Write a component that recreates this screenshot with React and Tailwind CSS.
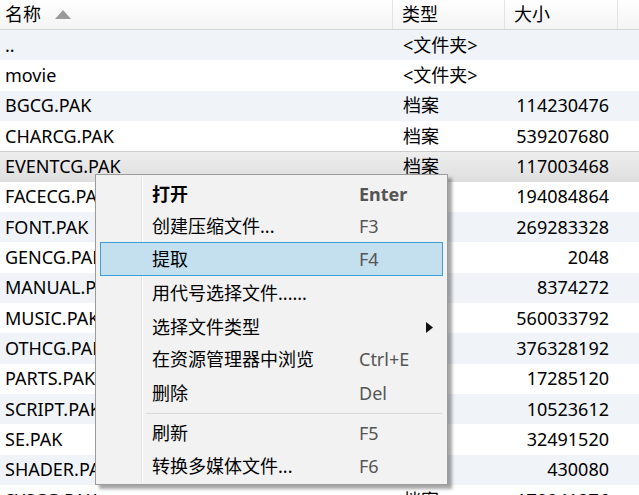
import React from "react";

const rows = [
  ["..", "<文件夹>", ""],
  ["movie", "<文件夹>", ""],
  ["BGCG.PAK", "档案", "114230476"],
  ["CHARCG.PAK", "档案", "539207680"],
  ["EVENTCG.PAK", "档案", "117003468"],
  ["FACECG.PAK", "档案", "194084864"],
  ["FONT.PAK", "档案", "269283328"],
  ["GENCG.PAK", "档案", "2048"],
  ["MANUAL.PAK", "档案", "8374272"],
  ["MUSIC.PAK", "档案", "560033792"],
  ["OTHCG.PAK", "档案", "376328192"],
  ["PARTS.PAK", "档案", "17285120"],
  ["SCRIPT.PAK", "档案", "10523612"],
  ["SE.PAK", "档案", "32491520"],
  ["SHADER.PAK", "档案", "430080"],
  ["SYSCG.PAK", "档案", "170041376"],
];

const items = [
  { label: "打开", key: "Enter", h: "h-[32px]", bold: true },
  { label: "创建压缩文件...", key: "F3", h: "h-[32px]" },
  { label: "提取", key: "F4", h: "h-[34px]", active: true },
  { label: "用代号选择文件......", key: "", h: "h-[35px]" },
  { label: "选择文件类型", key: "", h: "h-[32px]", sub: true },
  { label: "在资源管理器中浏览", key: "Ctrl+E", h: "h-[33px]" },
  { label: "删除", key: "Del", h: "h-[34px]" },
  { sep: true },
  { label: "刷新", key: "F5", h: "h-[34px]" },
  { label: "转换多媒体文件...", key: "F6", h: "h-[32px]" },
];

export default function App() {
  return (
    <div
      className="relative w-[639px] h-[495px] overflow-hidden bg-white text-black text-[18px]"
      style={{ fontFamily: '"Noto Sans", "Noto Sans CJK SC", sans-serif' }}
    >
      {/* header */}
      <div className="flex h-[30px] border-b border-[#d5d5d5] bg-gradient-to-b from-white to-[#f4f4f4] leading-normal">
        <div className="w-[393px] flex items-center pl-[5px] gap-[14px] border-r border-[#e3e3e3]">
          <span>名称</span>
          <svg width="16" height="9" viewBox="0 0 16 9">
            <polygon points="8,0 16,9 0,9" fill="#9a9a9a" />
          </svg>
        </div>
        <div className="w-[112px] flex items-center pl-[9px] border-r border-[#e3e3e3]">类型</div>
        <div className="w-[113px] flex items-center pl-[9px] border-r border-[#e3e3e3]">大小</div>
        <div className="flex-1" />
      </div>

      {/* rows */}
      <div className="flex flex-col">
        {rows.map((r, i) => {
          const sel = i === 4;
          const bg = sel
            ? "bg-gradient-to-b from-[#eeeeee] to-[#dedede] border-t border-[#cdcdcd]"
            : i % 2 === 0
            ? "bg-[#f0f4f9]"
            : "bg-white";
          return (
            <div key={i} className={`flex h-[30.33px] shrink-0 items-center leading-normal whitespace-nowrap ${bg}`}>
              <div className="w-[393px] pl-[5px]">{r[0]}</div>
              <div className="w-[112px] pl-[10px]">{r[1]}</div>
              <div className="w-[104px] text-right">{r[2]}</div>
            </div>
          );
        })}
      </div>

      {/* context menu */}
      <div className="absolute left-[95px] top-[174px] w-[353px] h-[311px] bg-[#f2f2f2] border border-[#9b9b9b] shadow-[4px_4px_3px_rgba(0,0,0,0.35)] py-[3px] px-[4px]">
        <div className="absolute left-[45px] top-[2px] bottom-[2px] w-px bg-[#e2e2e2]" />
        <div className="absolute left-[46px] top-[2px] bottom-[2px] w-px bg-white" />
        <div className="relative flex flex-col">
          {items.map((it, i) =>
            it.sep ? (
              <div key={i} className="h-[6px] flex items-center pl-[46px] pr-[1px]">
                <div className="h-px w-full bg-[#d9d9d9]" />
              </div>
            ) : (
              <div
                key={i}
                className={`flex items-center leading-normal whitespace-nowrap ${it.h} ${
                  it.active ? "bg-[#c4e0ef] border border-[#3c9edb]" : "border border-transparent"
                }`}
              >
                <div className="w-[51px]" />
                <div className={`w-[207px] ${it.bold ? "font-bold" : ""}`}>{it.label}</div>
                <div className={`flex-1 text-[#555] ${it.bold ? "font-bold text-[#444]" : ""}`}>{it.key}</div>
                {it.sub && (
                  <svg width="7" height="11" viewBox="0 0 7 11" className="mr-[9px]">
                    <polygon points="0,0 7,5.5 0,11" fill="#111" />
                  </svg>
                )}
              </div>
            )
          )}
        </div>
      </div>
    </div>
  );
}
